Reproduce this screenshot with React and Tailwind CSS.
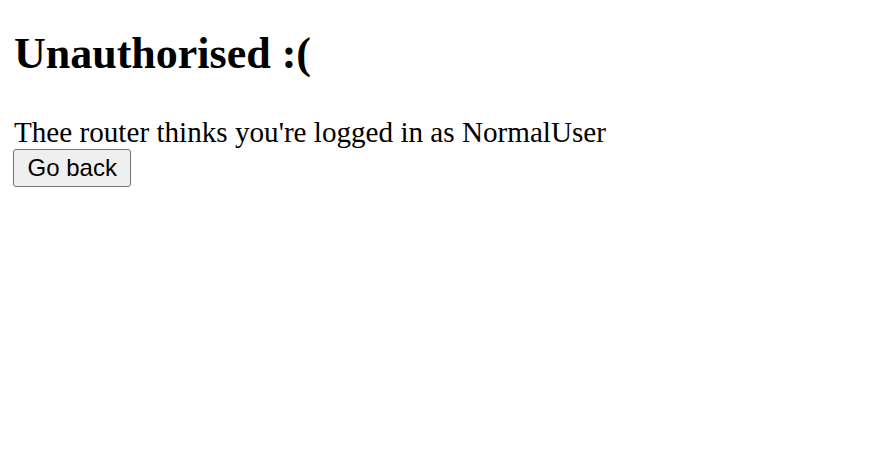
export default function App() {
  return (
    <div className="min-h-screen bg-white px-[14px] pt-[14px] text-black">
      <div className="font-['Liberation_Serif',serif] text-[29.15px] leading-[1.15]">
        <h1 className="mt-[15px] mb-[36px] text-[44px] font-bold leading-[1.15]">Unauthorised :(</h1>
        <div>Thee router thinks you're logged in as NormalUser</div>
        <button className="-ml-px rounded-[3px] border border-[#767676] bg-[#efefef] px-[13.5px] py-[4px] font-['Liberation_Sans',sans-serif] text-[24px] leading-[1.15]">Go back</button>
      </div>
    </div>
  );
}
